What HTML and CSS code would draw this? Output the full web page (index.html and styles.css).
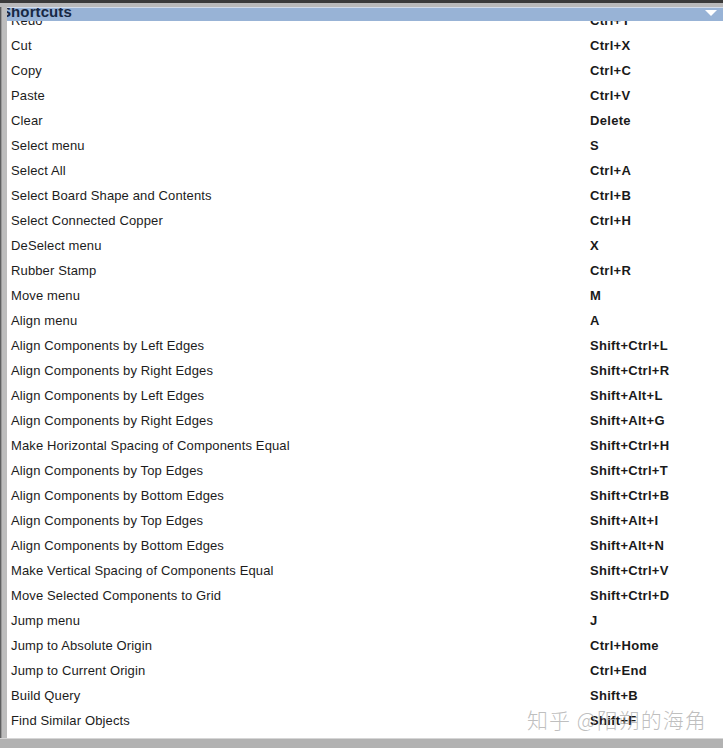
FILE: index.html
```html
<!DOCTYPE html>
<html lang="en">
<head>
  <meta charset="UTF-8">
  <title>Shortcuts</title>
  <link rel="stylesheet" href="styles.css">
</head>
<body>
  <div class="window">
    <div class="frame-top"></div>
    <div class="pane">
      <div class="pane-edge"></div>
      <div class="pane-main">
        <div class="pane-header">
          <span class="pane-title">Shortcuts</span>
          <span class="pane-arrow"></span>
        </div>
        <div class="list-clip">
          <div class="list">
            <div class="row"><span>Redo</span><b>Ctrl+Y</b></div>
            <div class="row"><span>Cut</span><b>Ctrl+X</b></div>
            <div class="row"><span>Copy</span><b>Ctrl+C</b></div>
            <div class="row"><span>Paste</span><b>Ctrl+V</b></div>
            <div class="row"><span>Clear</span><b>Delete</b></div>
            <div class="row"><span>Select menu</span><b>S</b></div>
            <div class="row"><span>Select All</span><b>Ctrl+A</b></div>
            <div class="row"><span>Select Board Shape and Contents</span><b>Ctrl+B</b></div>
            <div class="row"><span>Select Connected Copper</span><b>Ctrl+H</b></div>
            <div class="row"><span>DeSelect menu</span><b>X</b></div>
            <div class="row"><span>Rubber Stamp</span><b>Ctrl+R</b></div>
            <div class="row"><span>Move menu</span><b>M</b></div>
            <div class="row"><span>Align menu</span><b>A</b></div>
            <div class="row"><span>Align Components by Left Edges</span><b>Shift+Ctrl+L</b></div>
            <div class="row"><span>Align Components by Right Edges</span><b>Shift+Ctrl+R</b></div>
            <div class="row"><span>Align Components by Left Edges</span><b>Shift+Alt+L</b></div>
            <div class="row"><span>Align Components by Right Edges</span><b>Shift+Alt+G</b></div>
            <div class="row"><span>Make Horizontal Spacing of Components Equal</span><b>Shift+Ctrl+H</b></div>
            <div class="row"><span>Align Components by Top Edges</span><b>Shift+Ctrl+T</b></div>
            <div class="row"><span>Align Components by Bottom Edges</span><b>Shift+Ctrl+B</b></div>
            <div class="row"><span>Align Components by Top Edges</span><b>Shift+Alt+I</b></div>
            <div class="row"><span>Align Components by Bottom Edges</span><b>Shift+Alt+N</b></div>
            <div class="row"><span>Make Vertical Spacing of Components Equal</span><b>Shift+Ctrl+V</b></div>
            <div class="row"><span>Move Selected Components to Grid</span><b>Shift+Ctrl+D</b></div>
            <div class="row"><span>Jump menu</span><b>J</b></div>
            <div class="row"><span>Jump to Absolute Origin</span><b>Ctrl+Home</b></div>
            <div class="row"><span>Jump to Current Origin</span><b>Ctrl+End</b></div>
            <div class="row"><span>Build Query</span><b>Shift+B</b></div>
            <div class="row"><span>Find Similar Objects</span><b>Shift+F</b></div>
          </div>
          <!-- watermark sits over the last row -->
          <div class="watermark">知乎 @阳朔的海角</div>
        </div>
      </div>
    </div>
    <div class="frame-bottom"></div>
  </div>
</body>
</html>
```

FILE: styles.css
```css
html, body {
  margin: 0; padding: 0;
  width: 723px; height: 748px;
  overflow: hidden;
  background: #fff;
  font-family: 'Liberation Sans', Arial, sans-serif;
}
.window {
  width: 723px; height: 748px;
  display: flex; flex-direction: column;
}
.frame-top {
  height: 3px; background: #3a3a3a;
  border-bottom: 4px solid #b9b9ba;
  flex: none;
}
.frame-bottom {
  height: 9px; background: #b2b2b2;
  border-top: 1px solid #d6d6d6;
  flex: none;
}
.pane {
  flex: 1; display: flex; min-height: 0;
}
.pane-edge {
  width: 2px; flex: none;
  background: #5e5f60;
  border-right: 5px solid #bdbdbd;
  box-shadow: inset -1px 0 0 #9a9a9a;
}
.pane-main {
  flex: 1; display: flex; flex-direction: column; min-width: 0;
  background: #fff;
  overflow: hidden;
}
.pane-header {
  height: 13px; flex: none;
  background: #98b3d6;
  border-top: 1px solid #d3dcea;
  display: flex; align-items: flex-end; justify-content: space-between;
  overflow: hidden;
}
.pane-title {
  font-weight: bold; font-size: 15px; color: #172844;
  line-height: 15px; margin-left: -6px; margin-bottom: 2px;
  letter-spacing: 0.1px;
}
.pane-arrow {
  width: 0; height: 0; margin: 0 6px 4px 0; align-self: center;
  border-left: 6px solid transparent; border-right: 6px solid transparent;
  border-top: 6px solid #fff;
}
.list-clip {
  flex: 1; overflow: hidden; position: relative;
}
.list {
  margin-top: -13px;
  display: flex; flex-direction: column;
}
.row {
  height: 25px;
  display: grid; grid-template-columns: 579px 1fr;
  align-items: center;
  padding-left: 4px;
  font-size: 13px; color: #1c1c1c;
  letter-spacing: 0.13px;
}
.row b { font-weight: bold; color: #1a1a1a; letter-spacing: 0.3px; }
.watermark {
  position: absolute; left: 520px; top: 683px;
  font-family: 'Noto Sans CJK SC', sans-serif;
  font-size: 21px; font-weight: 300;
  color: rgba(170,170,170,0.75);
  letter-spacing: 1px;
  white-space: nowrap;
}
```
